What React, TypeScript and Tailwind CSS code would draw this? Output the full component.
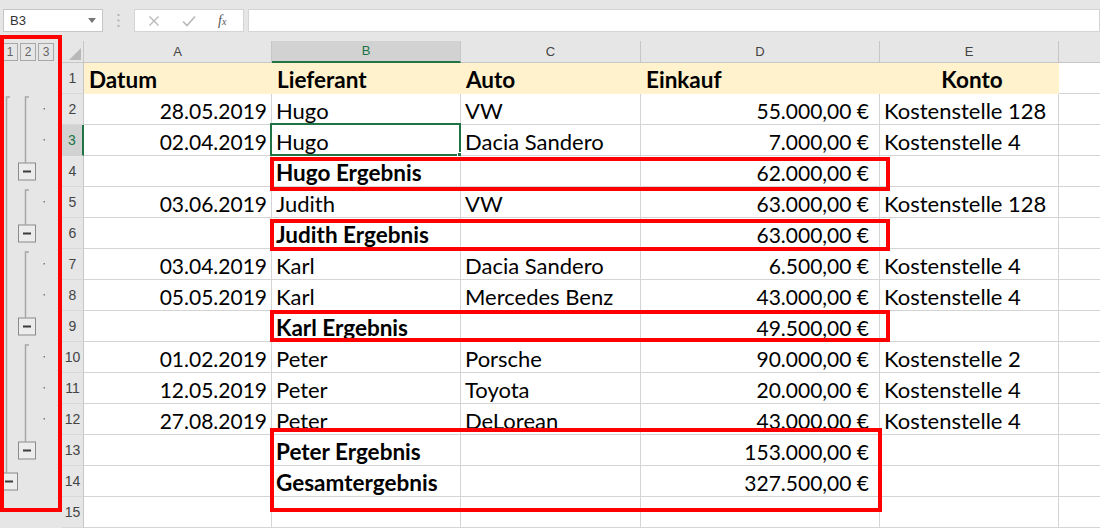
import React from 'react';

type Zeile = {
  a?: string;
  b?: string;
  c?: string;
  d?: string;
  e?: string;
  summe?: boolean;
  kopf?: boolean;
};

const zeilen: Zeile[] = [
  { a: 'Datum', b: 'Lieferant', c: 'Auto', d: 'Einkauf', e: 'Konto', kopf: true },
  { a: '28.05.2019', b: 'Hugo', c: 'VW', d: '55.000,00 €', e: 'Kostenstelle 128' },
  { a: '02.04.2019', b: 'Hugo', c: 'Dacia Sandero', d: '7.000,00 €', e: 'Kostenstelle 4' },
  { b: 'Hugo Ergebnis', d: '62.000,00 €', summe: true },
  { a: '03.06.2019', b: 'Judith', c: 'VW', d: '63.000,00 €', e: 'Kostenstelle 128' },
  { b: 'Judith Ergebnis', d: '63.000,00 €', summe: true },
  { a: '03.04.2019', b: 'Karl', c: 'Dacia Sandero', d: '6.500,00 €', e: 'Kostenstelle 4' },
  { a: '05.05.2019', b: 'Karl', c: 'Mercedes Benz', d: '43.000,00 €', e: 'Kostenstelle 4' },
  { b: 'Karl Ergebnis', d: '49.500,00 €', summe: true },
  { a: '01.02.2019', b: 'Peter', c: 'Porsche', d: '90.000,00 €', e: 'Kostenstelle 2' },
  { a: '12.05.2019', b: 'Peter', c: 'Toyota', d: '20.000,00 €', e: 'Kostenstelle 4' },
  { a: '27.08.2019', b: 'Peter', c: 'DeLorean', d: '43.000,00 €', e: 'Kostenstelle 4' },
  { b: 'Peter Ergebnis', d: '153.000,00 €', summe: true },
  { b: 'Gesamtergebnis', d: '327.500,00 €', summe: true },
  {},
];

// Gliederung: Gruppen der Ebene 2 (erste Zeile, Zeile mit Minus-Knopf)
const gruppen: [number, number][] = [
  [2, 4],
  [5, 6],
  [7, 9],
  [10, 13],
];
const detailZeilen = [2, 3, 5, 7, 8, 10, 11, 12];

const ROW = 31;
const mitte = (r: number) => (r - 1) * ROW + 15.5;

function MinusKnopf({ x, r }: { x: number; r: number }) {
  const y = mitte(r) - 9;
  return (
    <g>
      <rect x={x + 0.5} y={y + 0.5} width={17} height={17} fill="#ececec" stroke="#8a8a8a" />
      <line x1={x + 5} y1={y + 9} x2={x + 13} y2={y + 9} stroke="#3c3c3c" strokeWidth={2} />
    </g>
  );
}

function Gliederung() {
  return (
    <svg width={62} height={465} className="block">
      {/* Ebene 1 */}
      <path d={`M10 ${ROW + 3} H6.5 V${mitte(14) - 9}`} fill="none" stroke="#a6a6a6" strokeWidth={1.5} />
      {gruppen.map(([von, bis]) => (
        <path
          key={von}
          d={`M29 ${(von - 1) * ROW + 3} H25.5 V${mitte(bis) - 9}`}
          fill="none"
          stroke="#a6a6a6"
          strokeWidth={1.5}
        />
      ))}
      {detailZeilen.map(r => (
        <rect key={r} x={43.5} y={mitte(r) - 1.5} width={1.5} height={1.5} fill="#7a7a7a" />
      ))}
      {gruppen.map(([, bis]) => (
        <MinusKnopf key={bis} x={18} r={bis} />
      ))}
      <MinusKnopf x={0} r={14} />
    </svg>
  );
}

const spaltenBreite = ['w-[188px]', 'w-[189px]', 'w-[180px]', 'w-[239px]', 'w-[179px]'];
const spaltenName = ['A', 'B', 'C', 'D', 'E'];

function Zelle({
  breite,
  text,
  ausrichtung,
  fett,
  kopf,
  aktiv,
  zahl,
}: {
  breite: string;
  text?: string;
  ausrichtung: 'links' | 'rechts' | 'euro' | 'mitte';
  fett?: boolean;
  kopf?: boolean;
  aktiv?: boolean;
  zahl?: boolean;
}) {
  const align =
    ausrichtung === 'links'
      ? 'justify-start pl-[4px]'
      : ausrichtung === 'mitte'
        ? 'justify-center'
        : ausrichtung === 'euro'
          ? 'justify-end pr-[10px]'
          : 'justify-end pr-[4px]';
  const groesse = fett ? 'text-[22.5px] font-bold' : zahl ? 'text-[21px]' : 'text-[22px]';
  return (
    <div
      className={`relative flex shrink-0 items-center ${breite} ${align} h-full whitespace-nowrap ${
        kopf ? 'bg-[#fff2cc] pl-[5px]' : 'border-r border-b border-[#d4d4d4] bg-white'
      } ${groesse}`}
    >
      <span className="pt-[3px]">{text}</span>
      {aktiv && (
        <div className="pointer-events-none absolute -top-[2px] -left-[2px] -right-[1px] -bottom-[1px] border-2 border-[#217346]">
          <div className="absolute -right-[4px] -bottom-[4px] h-[6px] w-[6px] border border-white bg-[#217346]" />
        </div>
      )}
    </div>
  );
}

export default function App() {
  return (
    <div className="relative h-[528px] w-[1100px] overflow-hidden bg-[#e6e6e6] font-['Liberation_Sans',sans-serif]">
      {/* Bearbeitungsleiste */}
      <div className="flex h-[36px] items-start pt-[9px]">
        <div className="ml-[3px] flex h-[23px] w-[100px] items-center justify-between border border-[#c6c6c6] bg-white pl-[6px] pr-[6px] text-[13px] text-[#333]">
          <span>B3</span>
          <svg width="8" height="5" viewBox="0 0 8 5">
            <path d="M0 0 H8 L4 5 Z" fill="#777" />
          </svg>
        </div>
        <div className="flex h-[23px] w-[31px] items-center justify-center">
          <svg width="3" height="13" viewBox="0 0 3 13">
            <rect x="0.5" y="0" width="2" height="2" fill="#b4b4b4" />
            <rect x="0.5" y="5.5" width="2" height="2" fill="#b4b4b4" />
            <rect x="0.5" y="11" width="2" height="2" fill="#b4b4b4" />
          </svg>
        </div>
        <div className="flex h-[23px] w-[110px] items-center border border-[#d4d4d4] bg-white">
          <svg width="12" height="12" viewBox="0 0 12 12" className="ml-[13px]">
            <path d="M1.5 1.5 L10.5 10.5 M10.5 1.5 L1.5 10.5" stroke="#b9b9b9" strokeWidth="1.4" />
          </svg>
          <svg width="14" height="12" viewBox="0 0 14 12" className="ml-[22px]">
            <path d="M1 6.5 L5 10.5 L13 1.5" fill="none" stroke="#b9b9b9" strokeWidth="1.6" />
          </svg>
          <span className="ml-[22px] font-['Liberation_Serif',serif] text-[14px] italic text-[#555]">
            f<span className="text-[10px]">x</span>
          </span>
        </div>
        <div className="ml-[4px] h-[23px] flex-1 border border-[#d4d4d4] bg-white" />
      </div>

      <div className="flex">
        {/* Gliederungsbereich */}
        <div className="flex w-[62px] shrink-0 flex-col">
          <div className="flex h-[27px] items-start gap-[2px] pl-[2px] pt-[7px]">
            {['1', '2', '3'].map(n => (
              <div
                key={n}
                className="flex h-[18px] w-[16px] items-center justify-center border border-[#a8a8a8] text-[12px] text-[#666]"
              >
                {n}
              </div>
            ))}
          </div>
          <Gliederung />
        </div>

        {/* Tabelle */}
        <div className="flex-1 pt-[5px]">
          {/* Spaltenköpfe */}
          <div className="flex h-[22px] text-[13px] text-[#444]">
            <div className="flex w-[22px] shrink-0 items-end justify-end border-r border-b border-[#c6c6c6] p-[2px]">
              <svg width="12" height="12" viewBox="0 0 12 12">
                <path d="M12 0 V12 H0 Z" fill="#b8b8b8" />
              </svg>
            </div>
            {spaltenName.map((n, i) => (
              <div
                key={n}
                className={`flex shrink-0 items-center justify-center ${spaltenBreite[i]} border-r border-[#c6c6c6] ${
                  i === 1 ? 'border-b-2 border-b-[#217346] bg-[#d2d2d2] text-[#217346]' : 'border-b'
                }`}
              >
                {n}
              </div>
            ))}
            <div className="flex-1 border-b border-[#c6c6c6]" />
          </div>

          {/* Zeilen */}
          {zeilen.map((z, idx) => {
            const nr = idx + 1;
            return (
              <div key={nr} className="flex h-[31px] font-['Lato',sans-serif] text-black">
                <div
                  className={`flex w-[22px] shrink-0 items-center justify-center border-b font-['Liberation_Sans',sans-serif] text-[14px] ${
                    nr === 3
                      ? 'border-r-2 border-r-[#217346] border-b-[#d0d0d0] bg-[#d2d2d2] text-[#217346]'
                      : 'border-r border-[#c6c6c6] border-b-[#d8d8d8] text-[#444]'
                  }`}
                >
                  {nr}
                </div>
                <Zelle breite={spaltenBreite[0]} text={z.a} ausrichtung={z.kopf ? 'links' : 'rechts'} fett={z.kopf} kopf={z.kopf} zahl />
                <Zelle breite={spaltenBreite[1]} text={z.b} ausrichtung="links" fett={z.kopf || z.summe} kopf={z.kopf} aktiv={nr === 3} />
                <Zelle breite={spaltenBreite[2]} text={z.c} ausrichtung="links" fett={z.kopf} kopf={z.kopf} />
                <Zelle breite={spaltenBreite[3]} text={z.d} ausrichtung={z.kopf ? 'links' : 'euro'} fett={z.kopf} kopf={z.kopf} zahl />
                <Zelle breite={spaltenBreite[4]} text={z.e} ausrichtung={z.kopf ? 'mitte' : 'links'} fett={z.kopf} kopf={z.kopf} />
                <div className="flex-1 border-b border-[#d4d4d4] bg-white" />
              </div>
            );
          })}
        </div>
      </div>

      {/* rote Markierungen */}
      <div className="pointer-events-none absolute left-0 top-[35px] h-[477px] w-[62px] border-[4px] border-[#f00]" />
      <div className="pointer-events-none absolute left-[270px] top-[157px] h-[34px] w-[620px] border-[4px] border-[#f00]" />
      <div className="pointer-events-none absolute left-[270px] top-[219px] h-[32px] w-[620px] border-[4px] border-[#f00]" />
      <div className="pointer-events-none absolute left-[270px] top-[310px] h-[32px] w-[620px] border-[4px] border-[#f00]" />
      <div className="pointer-events-none absolute left-[270px] top-[428px] h-[84px] w-[612px] border-[4px] border-[#f00]" />
    </div>
  );
}
